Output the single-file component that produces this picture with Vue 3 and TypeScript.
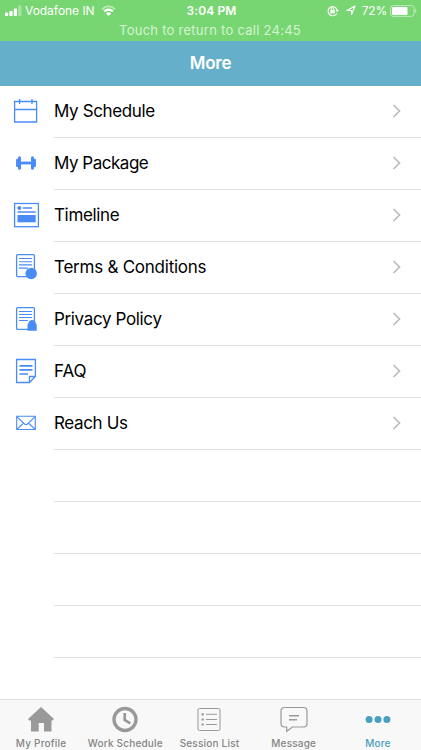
<script setup lang="ts">
interface MenuItem {
  label: string
  icon: string
  tracking: number
}

const items: MenuItem[] = [
  { label: 'My Schedule', icon: 'calendar', tracking: -0.38 },
  { label: 'My Package', icon: 'dumbbell', tracking: -0.48 },
  { label: 'Timeline', icon: 'timeline', tracking: -0.35 },
  { label: 'Terms & Conditions', icon: 'terms', tracking: -0.24 },
  { label: 'Privacy Policy', icon: 'privacy', tracking: -0.35 },
  { label: 'FAQ', icon: 'faq', tracking: -0.1 },
  { label: 'Reach Us', icon: 'mail', tracking: -0.36 },
]

const tabs: { label: string; icon: string }[] = [
  { label: 'My Profile', icon: 'home' },
  { label: 'Work Schedule', icon: 'clock' },
  { label: 'Session List', icon: 'list' },
  { label: 'Message', icon: 'message' },
  { label: 'More', icon: 'more' },
]
</script>

<template>
  <div class="screen">
    <header class="status">
      <div class="status-row">
        <div class="side left">
          <svg class="signal" width="17" height="12" viewBox="0 0 17 12" fill="#fff">
            <rect x="0" y="7.500" width="3.200" height="3.500" rx=".7" />
            <rect x="4.400" y="6" width="3.200" height="5" rx=".7" />
            <rect x="8.800" y="3.500" width="3.200" height="7.500" rx=".7" />
            <rect x="13.200" y=".5" width="3.200" height="10.500" rx=".7" opacity=".35" />
          </svg>
          <span class="carrier">Vodafone IN</span>
          <svg class="wifi" width="15" height="11" viewBox="0 0 15 11" fill="none" stroke="#fff">
            <path d="M1 4.200Q7.500-1.800 14 4.200" stroke-width="1.900" opacity=".45" />
            <path d="M3.200 6.500Q7.500 2.600 11.800 6.500" stroke-width="2.200" />
            <path d="M5 8.500Q7.500 6.200 10 8.500L7.500 11Z" fill="#fff" stroke="none" />
          </svg>
        </div>
        <span class="time">3:04 PM</span>
        <div class="side right">
          <svg width="12" height="12" viewBox="0 0 12 12" fill="none" stroke="#fff">
            <path d="M9.700 8.400A4.600 4.600 0 1 1 10.100 5" stroke-width="1.100" />
            <path d="M8.500 5h3.300l-1.600 2.200z" fill="#fff" stroke="none" />
            <rect x="3.300" y="5" width="4.400" height="3.400" fill="#fff" stroke="none" />
            <path d="M4.200 5V4a1.300 1.300 0 0 1 2.600 0v1" />
          </svg>
          <svg class="arrow" width="10" height="11" viewBox="0 0 10 11" fill="none" stroke="#fff">
            <path d="M9 1 5.500 9.500V5.500H1Z" stroke-width="1.100" stroke-linejoin="round" />
          </svg>
          <span class="percent">72%</span>
          <svg class="battery" width="27" height="12" viewBox="0 0 27 12">
            <rect x=".6" y=".6" width="23.400" height="10.800" rx="2.500" fill="none" stroke="#fff" opacity=".5" />
            <rect x="2" y="2" width="15.500" height="8" rx="1" fill="#fff" />
            <path d="M25 4v4q1.500-.6 1.500-2T25 4" fill="#fff" opacity=".5" />
          </svg>
        </div>
      </div>
      <div class="call">Touch to return to call 24:45</div>
    </header>

    <h1 class="title"><span>More</span></h1>

    <main class="list">
      <div v-for="item in items" :key="item.label" class="row">
        <svg class="icon" width="54" height="51" viewBox="0 0 54 51" fill="none" stroke="#4a8cf7" stroke-width="1.300">
          <template v-if="item.icon === 'calendar'">
            <path d="M14.600 15.500H36.600V36H14.600ZM14.600 23.500H36.600M19.600 13v5M32 13v5" />
          </template>
          <template v-else-if="item.icon === 'dumbbell'">
            <path d="M21 25H31" stroke-width="2.800" />
            <path d="M19.500 19.800v10.400M32.500 19.800v10.400" stroke-width="3" stroke-linecap="round" />
            <path d="M17.200 22v6M34.800 22v6" stroke-width="2.300" stroke-linecap="round" />
          </template>
          <template v-else-if="item.icon === 'timeline'">
            <rect x="14.600" y="13.500" width="23.800" height="23.200" />
            <circle cx="19.300" cy="18" r="2" fill="#4a8cf7" stroke="none" />
            <path d="M22.700 18H32M17.500 22H35.700" stroke-width="1.700" />
            <rect x="17.500" y="25" width="18.200" height="7.300" fill="#4a8cf7" stroke="none" />
          </template>
          <template v-else-if="item.icon === 'terms'">
            <rect x="16.600" y="12.600" width="17.800" height="22" rx="1" />
            <path d="M19 16.500H32M19 19.700H32M19 22.900H32M19 26.100H28" stroke-width="1.100" />
            <circle cx="31.200" cy="31.500" r="5.700" fill="#4a8cf7" stroke="none" />
          </template>
          <template v-else-if="item.icon === 'privacy'">
            <rect x="16.600" y="13.600" width="17.800" height="21.800" rx="1" />
            <path d="M19 17.500H32M19 20.500H32M19 23.500H32M19 26.500H28" stroke-width="1.100" />
            <path d="M27.500 36.800V30.500L28.300 29.500C28.500 24.800 35.600 24.800 35.800 29.500L36.700 30.500V36.800Z" fill="#4a8cf7" stroke="none" />
          </template>
          <template v-else-if="item.icon === 'faq'">
            <path d="M16.600 13.500H35.400V30.500L29.500 36.500H16.600ZM29.500 36.500V30.500H35.400" />
            <path d="M19.500 19.800H32.500M19.500 23.800H32.500M19.500 28H28" stroke-width="1.700" />
          </template>
          <template v-else>
            <path d="M16.700 18.300H35.300V31.500H16.700ZM17 18.800 24.500 26Q26 27.300 27.500 26L35 18.800M17 31.300 23.500 25M35 31.300 28.500 25" stroke-width="1.100" />
          </template>
        </svg>
        <div class="cell">
          <span class="label" :style="{ letterSpacing: item.tracking + 'px' }">{{ item.label }}</span>
          <svg width="10" height="16" viewBox="0 0 10 16" fill="none" stroke="#bcbcc1" stroke-width="1.700">
            <path d="M1.500 2 7.500 8 1.500 14" />
          </svg>
        </div>
      </div>
      <div v-for="n in 4" :key="n" class="row empty"><div class="cell"></div></div>
    </main>

    <nav class="tabs">
      <div v-for="tab in tabs" :key="tab.label" class="tab" :class="{ active: tab.icon === 'more' }">
        <svg width="30" height="30" viewBox="0 0 30 30" fill="none" stroke="#999">
          <path v-if="tab.icon === 'home'" d="M15 2 28 14 26.500 15.400H25.500V26.500H18V18H12.700V26.500H5V15.400H3.300L2 14Z" fill="#999" stroke="none" />
          <template v-else-if="tab.icon === 'clock'">
            <circle cx="15" cy="14.500" r="11" stroke-width="3.300" />
            <path d="M14.700 8v7L20.300 18.400" stroke-width="2.700" />
          </template>
          <template v-else-if="tab.icon === 'list'">
            <rect x="4" y="3.500" width="22" height="22" rx="1.500" />
            <path d="M12 9.300H23M12 14.500H23M12 19.500H23" />
            <path d="M7.500 9.300h2.300M7.500 14.500h2.300M7.500 19.500h2.300" stroke-width="2.200" />
          </template>
          <template v-else-if="tab.icon === 'message'">
            <path d="M5.500 2.500H24.500Q28 2.500 28 6V18.500Q28 22 24.500 22H13.500L7.700 26.300V22H5.500Q2 22 2 18.500V6Q2 2.500 5.500 2.500Z" stroke-width="1.200" />
            <path d="M10 10.800H20M10 14.700H18" stroke-width="1.500" />
          </template>
          <g v-else fill="#489fc0" stroke="none">
            <circle cx="6.100" cy="14.500" r="3.500" />
            <circle cx="15" cy="14.500" r="3.500" />
            <circle cx="23.900" cy="14.500" r="3.500" />
          </g>
        </svg>
        <span>{{ tab.label }}</span>
      </div>
    </nav>
  </div>
</template>

<style>
body {
  margin: 0;
}
</style>

<style scoped>
.screen {
  display: flex;
  flex-direction: column;
  width: 421px;
  height: 750px;
  overflow: hidden;
  background: #fff;
  color: #000;
  font-family: Inter, "Liberation Sans", sans-serif;
}
.status {
  height: 41px;
  flex: none;
  background: #77d672;
  color: #fff;
}
.status-row {
  display: grid;
  grid-template-columns: 1fr auto 1fr;
  align-items: center;
  height: 21px;
  font-size: 12px;
  white-space: nowrap;
}
.side {
  display: flex;
  align-items: center;
}
.left {
  padding-left: 5px;
}
.carrier {
  margin-left: 3px;
  letter-spacing: -0.03px;
}
.wifi {
  margin-left: 6px;
}
.time {
  padding-left: 2px;
  font-weight: 600;
  letter-spacing: 0.1px;
}
.right {
  justify-content: flex-end;
  padding-right: 4px;
}
.arrow {
  margin-left: 7px;
}
.percent {
  margin: 0 3px 0 6px;
  letter-spacing: -0.2px;
}
.call {
  height: 18px;
  padding-right: 1px;
  line-height: 18px;
  text-align: center;
  font-size: 13px;
  letter-spacing: 0.26px;
  color: #d5f3d2;
}
.title {
  display: flex;
  align-items: center;
  justify-content: center;
  flex: none;
  box-sizing: border-box;
  height: 45px;
  margin: 0;
  padding-bottom: 1px;
  background: #66afca;
  color: #fff;
  font-size: 17px;
  font-weight: 600;
  letter-spacing: -0.2px;
}
.list {
  flex: 1;
}
.row {
  display: flex;
  height: 52px;
}
.icon {
  flex: none;
}
.cell {
  flex: 1;
  display: flex;
  align-items: center;
  justify-content: space-between;
  box-sizing: border-box;
  padding-right: 19px;
  border-bottom: 1px solid #e1e1e3;
}
.cell svg {
  margin-bottom: 1px;
}
.empty {
  padding-left: 54px;
}
.label {
  padding-bottom: 1px;
  font-size: 17px;
  white-space: nowrap;
}
.tabs {
  display: grid;
  grid-template-columns: repeat(5, 1fr);
  box-sizing: border-box;
  height: 51px;
  flex: none;
  border-top: 1px solid #dedede;
  background: #f8f8f8;
}
.tab {
  display: flex;
  flex-direction: column;
  align-items: center;
  padding: 5px 2px 0 0;
  color: #858585;
  font-size: 10px;
  font-weight: 500;
  line-height: 16px;
  letter-spacing: 0.2px;
  white-space: nowrap;
}
.active {
  color: #489fc0;
}
</style>
